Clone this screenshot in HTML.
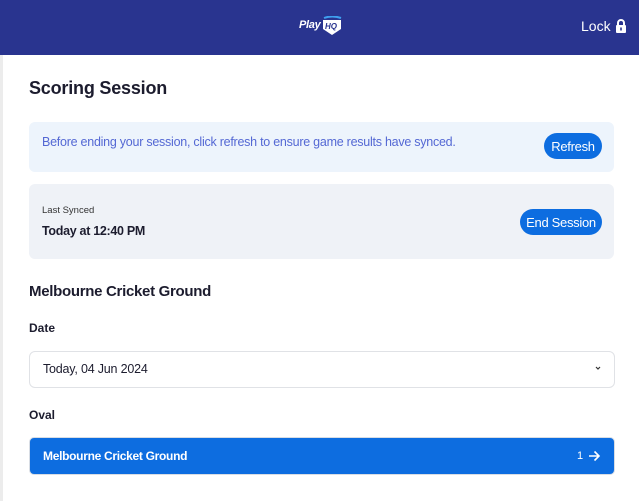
<!DOCTYPE html>
<html><head><style>
*{margin:0;padding:0;box-sizing:border-box}
body{width:639px;height:501px;overflow:hidden;background:#fff;font-family:"Liberation Sans",sans-serif;color:#1c1c2e;position:relative}
.hdr{position:absolute;left:0;top:0;width:639px;height:55px;background:#29348f}
.abs{position:absolute;white-space:nowrap}
.lb{position:absolute;left:0;top:55px;width:3px;height:446px;background:#ececec}
.btn{position:absolute;background:#0d6de0;color:#fff;border-radius:14px;font-size:13px;letter-spacing:-0.3px;display:flex;align-items:center;justify-content:center}
</style></head><body>
<div class="hdr">
  <div class="abs" style="left:299px;top:19px;color:#fff;font-weight:bold;font-style:italic;font-size:11px;letter-spacing:-0.3px">Play</div>
  <svg class="abs" style="left:321px;top:16px" width="22" height="20" viewBox="0 0 22 20"><path d="M3 2 Q11 -1 20 2" stroke="#3fa0f0" stroke-width="2" fill="none"/><path d="M2 4 H20 V13 L11 19 L2 13 Z" fill="#fff"/><text x="4" y="13" font-size="8" font-weight="bold" font-style="italic" fill="#29348f" font-family="Liberation Sans">HQ</text></svg>
  <div class="abs" style="left:581px;top:18px;color:#fff;font-size:14px">Lock</div>
  <svg class="abs" style="left:615px;top:19px" width="12" height="14" viewBox="0 0 12 14"><path d="M3 6 V4 a3 3 0 0 1 6 0 V6" stroke="#fff" stroke-width="2" fill="none"/><rect x="1" y="6" width="10" height="8" rx="1" fill="#fff"/><rect x="5.2" y="8.5" width="1.6" height="3" fill="#29348f"/></svg>
</div>
<div class="lb"></div>
<div class="abs" style="left:29px;top:78px;font-size:18px;font-weight:bold;letter-spacing:-0.2px">Scoring Session</div>
<div class="abs" style="left:29px;top:122px;width:585px;height:50px;background:#edf4fc;border-radius:6px"></div>
<div class="abs" style="left:42px;top:135px;font-size:12.5px;color:#5468d4;letter-spacing:-0.25px">Before ending your session, click refresh to ensure game results have synced.</div>
<div class="btn" style="left:544px;top:133px;width:58px;height:26px">Refresh</div>
<div class="abs" style="left:29px;top:184px;width:585px;height:75px;background:#eff2f7;border-radius:6px"></div>
<div class="abs" style="left:42px;top:205px;font-size:9.5px;color:#333">Last Synced</div>
<div class="abs" style="left:42px;top:224px;font-size:12.5px;font-weight:bold;letter-spacing:-0.3px">Today at 12:40 PM</div>
<div class="btn" style="left:520px;top:209px;width:82px;height:26px">End Session</div>
<div class="abs" style="left:29px;top:283px;font-size:15px;font-weight:bold;letter-spacing:-0.3px">Melbourne Cricket Ground</div>
<div class="abs" style="left:29px;top:321px;font-size:12px;font-weight:bold">Date</div>
<div class="abs" style="left:29px;top:351px;width:586px;height:37px;border:1px solid #e0e2e6;border-radius:6px"></div>
<div class="abs" style="left:43px;top:362px;font-size:12.5px;letter-spacing:-0.2px">Today, 04 Jun 2024</div>
<svg class="abs" style="left:595px;top:366px" width="6" height="5" viewBox="0 0 6 5"><path d="M1 1 L3 3 L5 1" stroke="#333" stroke-width="1.2" fill="none"/></svg>
<div class="abs" style="left:29px;top:408px;font-size:12px;font-weight:bold">Oval</div>
<div class="abs" style="left:29px;top:437px;width:586px;height:38px;background:#0d6de0;border-radius:5px;border:1px solid #d8dde4"></div>
<div class="abs" style="left:43px;top:449px;font-size:12px;font-weight:bold;color:#fff;letter-spacing:-0.3px">Melbourne Cricket Ground</div>
<div class="abs" style="left:577px;top:450px;font-size:11px;color:#fff">1</div>
<svg class="abs" style="left:587px;top:449px" width="14" height="14" viewBox="0 0 14 14"><path d="M2 7 H12 M7.5 2.5 L12 7 L7.5 11.5" stroke="#fff" stroke-width="1.6" fill="none"/></svg>
</body></html>
